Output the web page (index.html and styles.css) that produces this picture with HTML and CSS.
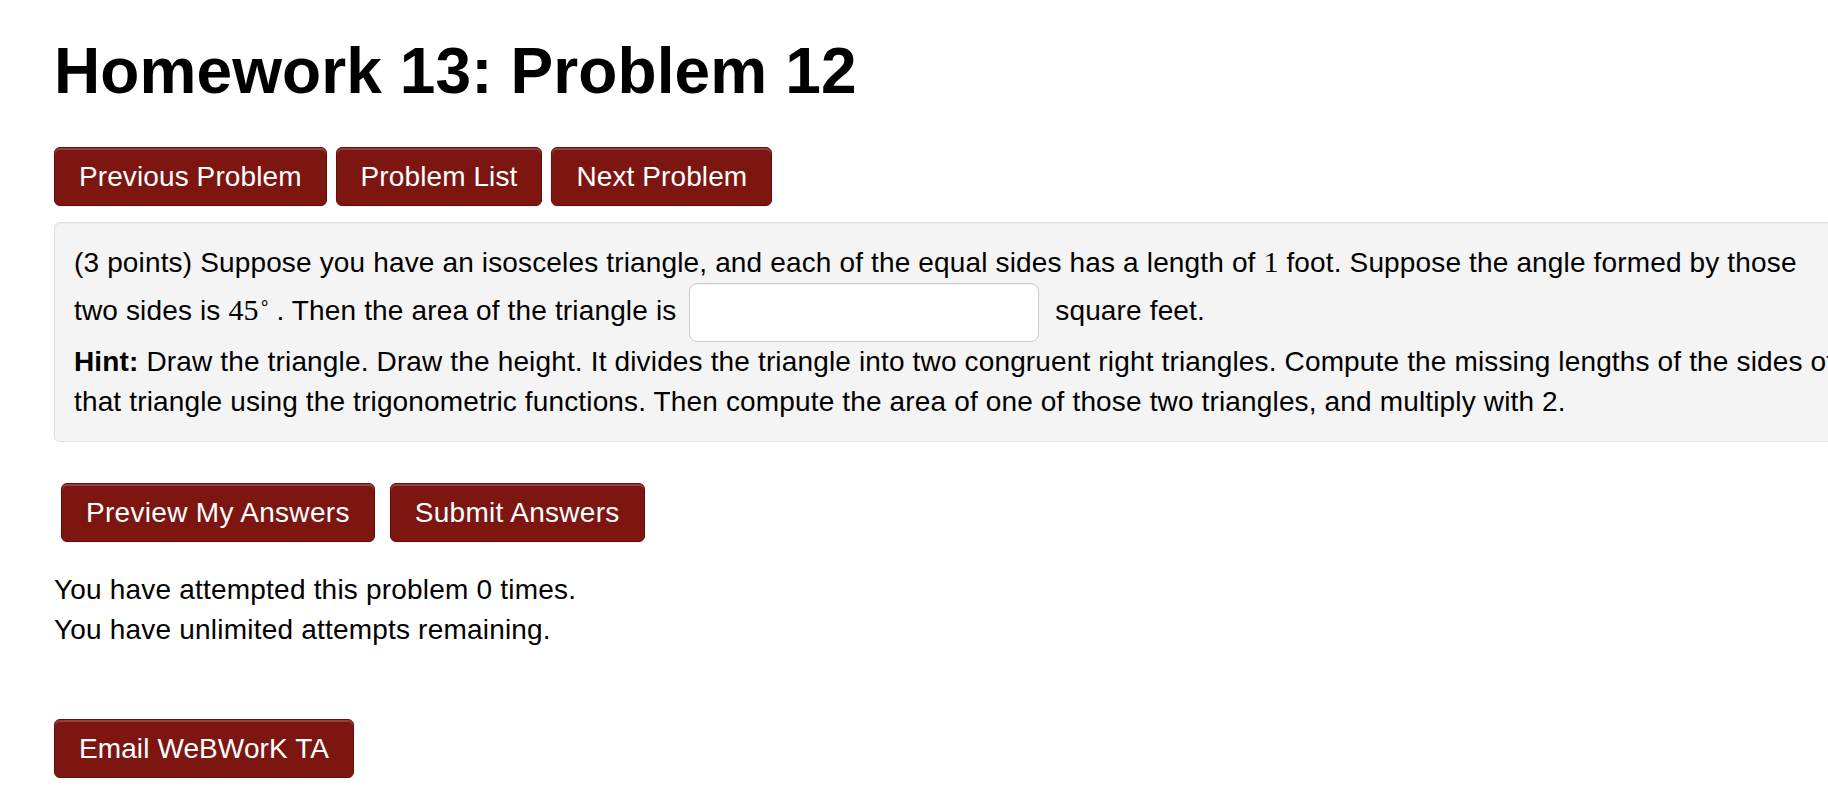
FILE: index.html
```html
<!DOCTYPE html>
<html lang="en">
<head>
<meta charset="utf-8">
<title>Homework 13: Problem 12</title>
<link rel="stylesheet" href="styles.css">
</head>
<body>
<div class="page">
  <h1 class="title">Homework 13: Problem 12</h1>
  <div class="nav">
    <a class="btn">Previous Problem</a>
    <a class="btn">Problem List</a>
    <a class="btn">Next Problem</a>
  </div>
  <div class="well">
    <div class="problem">(3 points) Suppose you have an isosceles triangle, and each of the equal sides has a length of <span class="math">1</span> foot. Suppose the angle formed by those two sides is <span class="math">45<sup class="deg">&#8728;</sup></span>. Then the area of the triangle is <input class="answer" type="text"> square feet.</div>
    <div class="hint"><b>Hint:</b> Draw the triangle. Draw the height. It divides the triangle into two congruent right triangles. Compute the missing lengths of the sides of that triangle using the trigonometric functions. Then compute the area of one of those two triangles, and multiply with 2.</div>
  </div>
  <div class="actions">
    <a class="btn">Preview My Answers</a>
    <a class="btn">Submit Answers</a>
  </div>
  <div class="attempts">
    <div>You have attempted this problem 0 times.</div>
    <div>You have unlimited attempts remaining.</div>
  </div>
  <div class="email">
    <a class="btn">Email WeBWorK TA</a>
  </div>
</div>
</body>
</html>
```
FILE: styles.css
```css
html, body {
  margin: 0;
  padding: 0;
  background: #fff;
}
body {
  overflow: hidden;
  font-family: "Liberation Sans", Arial, Helvetica, sans-serif;
  font-size: 28px;
  line-height: 40px;
  letter-spacing: 0.2px;
  color: #000;
}
.page {
  padding-left: 54px;
  width: 1900px;
}
.title {
  margin: 31px 0 0 0;
  font-size: 64px;
  line-height: 80px;
  font-weight: bold;
  letter-spacing: 0.1px;
}
.nav {
  display: flex;
  gap: 9px;
  margin-top: 36px;
}
.btn {
  display: inline-block;
  box-sizing: border-box;
  height: 59px;
  padding: 8.5px 24px;
  font-size: 28px;
  line-height: 40px;
  letter-spacing: 0.1px;
  color: #fff;
  background: #7d1610;
  border: 1px solid #5f100b;
  border-radius: 6px;
  box-shadow: inset 0 2px 0 rgba(255,255,255,0.18), 0 1px 2px rgba(0,0,0,0.08);
  white-space: nowrap;
  cursor: pointer;
}
.actions .btn {
  letter-spacing: 0.3px;
}
.well {
  margin-top: 16px;
  width: 1770px;
  padding: 19px;
  letter-spacing: 0.15px;
  background: #f4f4f4;
  border: 1px solid #e1e1e1;
  border-radius: 6px;
  box-shadow: inset 0 1px 1px rgba(0,0,0,0.04);
}
.math {
  font-family: "Liberation Serif", "Times New Roman", serif;
  font-size: 30px;
  letter-spacing: 0;
}
.deg {
  font-size: 18px;
  vertical-align: 12px;
  line-height: 0;
  margin-left: 1px;
  margin-right: 6px;
}
.answer {
  box-sizing: border-box;
  width: 350px;
  height: 59px;
  margin: 0 8px 0 5px;
  padding: 8px 12px;
  font-family: "Liberation Sans", Arial, sans-serif;
  font-size: 28px;
  line-height: 40px;
  vertical-align: middle;
  background: #fff;
  border: 1px solid #cccccc;
  border-radius: 8px;
  box-shadow: inset 0 1px 1px rgba(0,0,0,0.06);
  outline: none;
}
.actions {
  display: flex;
  gap: 15px;
  margin-top: 41px;
  padding-left: 7px;
}
.attempts {
  margin-top: 28px;
}
.email {
  margin-top: 69px;
}
```
